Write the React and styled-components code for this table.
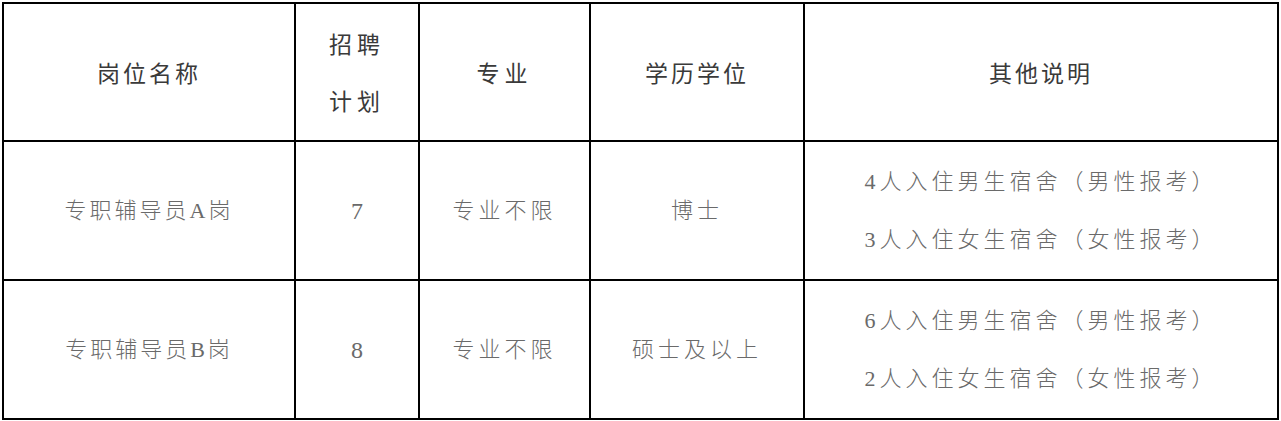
import React from "react";
import styled, { createGlobalStyle } from "styled-components";

const Global = createGlobalStyle`
  html, body { margin: 0; padding: 0; background: #fff; }
  body { font-family: "Noto Sans CJK SC", "Noto Sans", sans-serif; }
`;

const Page = styled.div`
  padding: 2px 0 0 2px;
`;

const Table = styled.table`
  border-collapse: collapse;
  table-layout: fixed;
  width: 1275px;
`;

const HeadCell = styled.th`
  border: 2px solid #000;
  height: 136px;
  padding: 0;
  text-align: center;
  vertical-align: middle;
  font-family: "Noto Sans CJK SC", sans-serif;
  font-size: 23px;
  font-weight: 400;
  color: #3a3a3a;
  letter-spacing: ${(p) => p.$ls ?? 3}px;
  line-height: 57px;
`;

const Cell = styled.td`
  border: 2px solid #000;
  height: 137px;
  padding: 0;
  text-align: center;
  vertical-align: middle;
  font-family: "Liberation Serif", "Noto Sans CJK SC", serif;
  font-size: ${(p) => p.$size ?? 22}px;
  font-weight: 300;
  color: #6a6a6a;
  letter-spacing: ${(p) => p.$ls ?? 4}px;
  line-height: 58px;
`;

const Line = styled.div`
  display: block;
`;

const rows = [
  {
    name: "专职辅导员A岗",
    plan: "7",
    major: "专业不限",
    degree: "博士",
    notes: ["4人入住男生宿舍（男性报考）", "3人入住女生宿舍（女性报考）"],
  },
  {
    name: "专职辅导员B岗",
    plan: "8",
    major: "专业不限",
    degree: "硕士及以上",
    notes: ["6人入住男生宿舍（男性报考）", "2人入住女生宿舍（女性报考）"],
  },
];

export default function App() {
  return (
    <>
      <Global />
      <Page>
        <Table>
          <colgroup>
            <col style={{ width: 292 }} />
            <col style={{ width: 124 }} />
            <col style={{ width: 171 }} />
            <col style={{ width: 214 }} />
            <col style={{ width: 474 }} />
          </colgroup>
          <thead>
            <tr>
              <HeadCell>岗位名称</HeadCell>
              <HeadCell $ls={5}>
                <Line>招聘</Line>
                <Line>计划</Line>
              </HeadCell>
              <HeadCell $ls={5}>专业</HeadCell>
              <HeadCell>学历学位</HeadCell>
              <HeadCell>其他说明</HeadCell>
            </tr>
          </thead>
          <tbody>
            {rows.map((r) => (
              <tr key={r.name}>
                <Cell $ls={3}>{r.name}</Cell>
                <Cell $ls={0} $size={24}>{r.plan}</Cell>
                <Cell>{r.major}</Cell>
                <Cell>{r.degree}</Cell>
                <Cell>
                  {r.notes.map((n) => (
                    <Line key={n}>{n}</Line>
                  ))}
                </Cell>
              </tr>
            ))}
          </tbody>
        </Table>
      </Page>
    </>
  );
}
